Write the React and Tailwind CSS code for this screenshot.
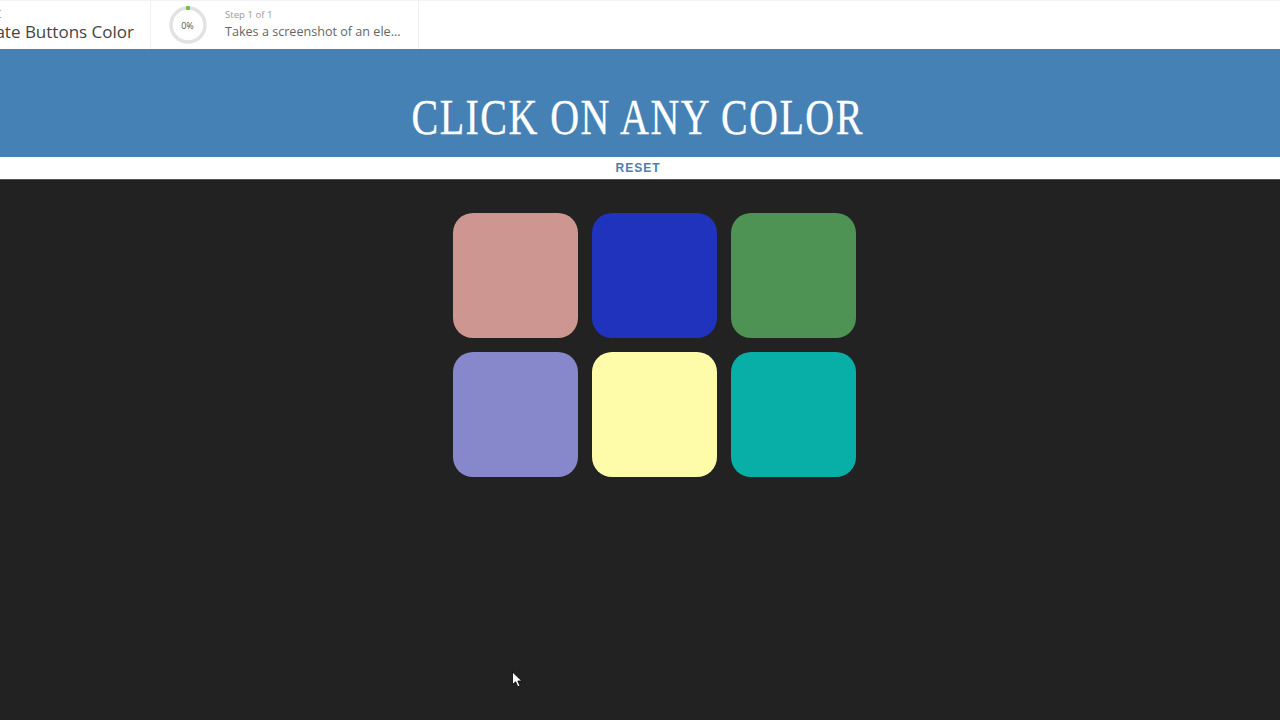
export default function App() {
  const colors = ["bg-[#cd9690]", "bg-[#2033bd]", "bg-[#4e9254]", "bg-[#8787cb]", "bg-[#fefca8]", "bg-[#08afa7]"];
  return (
    <div className="relative flex h-[720px] w-[1280px] flex-col overflow-hidden bg-[#222222] font-['Open_Sans',sans-serif]">
      <header className="flex h-[49px] shrink-0 border-t border-[#f1f3f6] bg-white">
        <div className="relative flex w-[151px] shrink-0 items-end justify-end overflow-hidden border-r border-[#eef0f3] pb-[5px] pr-[16px]">
          <span className="absolute left-[-5px] top-[6px] text-[10px] leading-[14px] text-[#8a8a8a]">C</span>
          <span className="whitespace-nowrap text-[17px] leading-[24px] text-[#444444]">Create Buttons Color</span>
        </div>
        <div className="flex w-[268px] shrink-0 items-center border-r border-[#eef0f3] pl-[17px]">
          <div className="relative flex h-10 w-10 items-center justify-center">
            <svg viewBox="0 0 40 40" className="absolute inset-0 h-10 w-10">
              <circle cx="20" cy="20" r="17" fill="none" stroke="#e2e2e2" strokeWidth="3.5" />
              <circle cx="20" cy="3" r="2.2" fill="#6cc04a" />
            </svg>
            <span className="mr-[1px] text-[9px] leading-none text-[#555555]">0%</span>
          </div>
          <div className="ml-[17px] flex flex-col">
            <span className="text-[9.6px] leading-[14px] text-[#9a9a9a]">Step 1 of 1</span>
            <span className="whitespace-nowrap text-[12.6px] leading-[20px] text-[#666666]">Takes a screenshot of an ele...</span>
          </div>
        </div>
      </header>
      <div className="flex h-[108px] shrink-0 items-end justify-center bg-[#4581b5] pb-[12px] pr-[4px]">
        <h1 className="origin-center scale-x-[0.8] whitespace-nowrap font-['Liberation_Serif',serif] text-[50px] font-normal leading-[56px] tracking-[1.8px] text-white [-webkit-text-stroke:0.3px_white]">CLICK ON ANY COLOR</h1>
      </div>
      <div className="flex h-[23px] shrink-0 items-center justify-center border-b border-[#555555] bg-white pr-[4px]">
        <span className="font-['Liberation_Sans',sans-serif] text-xs font-bold tracking-[1px] text-[#4581b5]">RESET</span>
      </div>
      <div className="ml-[453px] mt-[33px] grid w-[403px] grid-cols-[125px_125px_125px] gap-x-[14px] gap-y-[14px]">
        {colors.map((c) => (
          <div key={c} className={`h-[125px] w-[125px] rounded-[20px] ${c}`} />
        ))}
      </div>
      <svg viewBox="0 0 12 18" className="absolute left-[511px] top-[671px] h-[18px] w-[12px]">
        <path d="M1.5 1 L1.5 13.5 L4.6 10.8 L6.8 15.8 L9 14.8 L6.8 10 L10.8 10 Z" fill="#ffffff" stroke="#000000" strokeWidth="0.8" />
      </svg>
    </div>
  );
}
